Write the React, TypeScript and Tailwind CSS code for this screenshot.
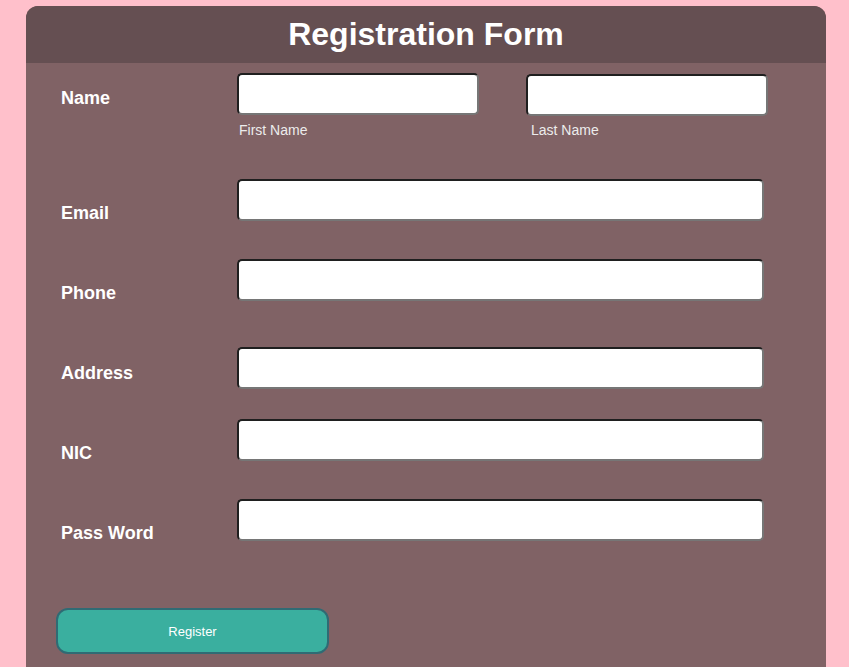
const inputCls =
    "block h-[42px] bg-white rounded-[5px] border-2 border-t-[#1f1f1f] border-l-[#1f1f1f] border-b-[#767676] border-r-[#767676] outline-none";

const Row = ({ label, labelPad, top, children }: { label: string; labelPad: string; top: string; children: React.ReactNode }) => (
    <div className={`flex h-[42px] ${top}`}>
        <div className={`w-[176px] shrink-0 text-[18px] leading-5 font-bold text-white ${labelPad}`}>{label}</div>
        {children}
    </div>
);

const App = () => {
    return (
        <div className="min-h-[667px] bg-[#ffc0cb] pt-[6px] pl-[26px]" style={{ fontFamily: '"Liberation Sans", Arial, sans-serif' }}>
            <div className="w-[800px] rounded-t-[12px] overflow-hidden bg-[#806265]">
                <div className="h-[57px] bg-[#654f52] flex items-center justify-center pb-[2px]">
                    <h1 className="text-[32px] font-bold text-white leading-none">Registration Form</h1>
                </div>

                <div className="pl-[35px] pt-[10px] pb-[20px]">
                    <div className="flex">
                        <div className="w-[176px] shrink-0 text-[18px] leading-5 font-bold text-white pt-[15px]">Name</div>
                        <div className="flex gap-[47px]">
                            <div>
                                <input className={`${inputCls} w-[242px]`} />
                                <div className="mt-[7px] ml-[2px] text-[14px] leading-4 text-[#ececec]">First Name</div>
                            </div>
                            <div className="mt-px">
                                <input className={`${inputCls} w-[242px]`} />
                                <div className="mt-[6px] ml-[5px] text-[14px] leading-4 text-[#ececec]">Last Name</div>
                            </div>
                        </div>
                    </div>

                    <Row label="Email" labelPad="pt-[24px]" top="mt-[41px]">
                        <input className={`${inputCls} w-[527px]`} />
                    </Row>
                    <Row label="Phone" labelPad="pt-[24px]" top="mt-[38px]">
                        <input className={`${inputCls} w-[527px]`} />
                    </Row>
                    <Row label="Address" labelPad="pt-[16px]" top="mt-[46px]">
                        <input className={`${inputCls} w-[527px]`} />
                    </Row>
                    <Row label="NIC" labelPad="pt-[24px]" top="mt-[30px]">
                        <input className={`${inputCls} w-[527px]`} />
                    </Row>
                    <Row label="Pass Word" labelPad="pt-[24px]" top="mt-[38px]">
                        <input type="password" className={`${inputCls} w-[527px]`} />
                    </Row>

                    <button className="mt-[67px] -ml-[5px] w-[273px] h-[46px] rounded-[12px] bg-[#3aaf9f] border-2 border-[#2f6b74] text-white text-[13px] pt-[2px]">
                        Register
                    </button>
                </div>
            </div>
        </div>
    );
};

export default App;
